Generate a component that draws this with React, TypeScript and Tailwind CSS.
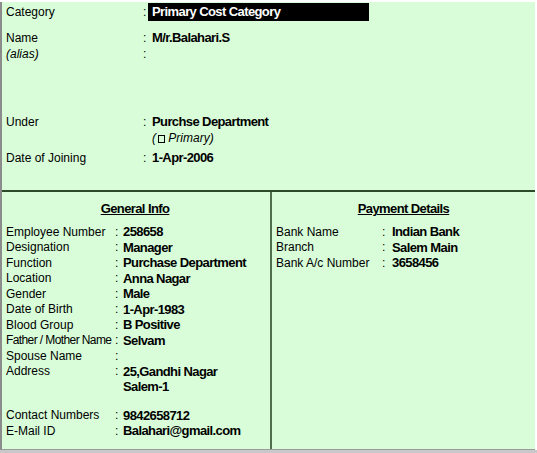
const FONT = { fontFamily: '"Liberation Sans", Arial, sans-serif' };

type Row = { label: string; value?: string; cont?: boolean; tight?: boolean };

const GENERAL: Row[] = [
  { label: 'Employee Number', value: '258658' },
  { label: 'Designation', value: 'Manager' },
  { label: 'Function', value: 'Purchase Department' },
  { label: 'Location', value: 'Anna Nagar' },
  { label: 'Gender', value: 'Male' },
  { label: 'Date of Birth', value: '1-Apr-1983' },
  { label: 'Blood Group', value: 'B Positive' },
  { label: 'Father / Mother Name', value: 'Selvam', tight: true },
  { label: 'Spouse Name', value: '' },
  { label: 'Address', value: '25,Gandhi Nagar' },
  { label: '', value: 'Salem-1', cont: true },
];

const CONTACT: Row[] = [
  { label: 'Contact Numbers', value: '9842658712' },
  { label: 'E-Mail ID', value: 'Balahari@gmail.com' },
];

const PAYMENT: Row[] = [
  { label: 'Bank Name', value: 'Indian Bank' },
  { label: 'Branch', value: 'Salem Main' },
  { label: 'Bank A/c Number', value: '3658456' },
];

function InfoRow({ row, labelW, colonW }: { row: Row; labelW: string; colonW: string }) {
  return (
    <div className="flex items-center h-[15.5px] whitespace-nowrap">
      <span className={`${labelW} shrink-0 text-[12px] ${row.tight ? 'tracking-[-0.6px]' : ''}`}>{row.label}</span>
      <span className={`${colonW} shrink-0 text-[12px]`}>{row.cont ? '' : ':'}</span>
      <span className="text-[13px] font-bold tracking-[-0.6px]">{row.value}</span>
    </div>
  );
}

export default function App() {
  return (
    <div className="w-[537px] h-[453px] bg-white text-black overflow-hidden" style={FONT}>
      <div className="mt-[2px] w-[535px] h-[448px] bg-[#d9fdd9] border-l-2 border-[#8c8c8c] border-b border-b-[#9a9a9a] flex flex-col">
        {/* Top: category / name */}
        <div className="h-[188px] shrink-0 pl-[4px] pt-[1px]">
          <div className="flex items-center h-[18px]">
            <span className="w-[137px] text-[12px]">Category</span>
            <span className="w-[5px] text-[12px]">:</span>
            <span className="w-[221px] h-[18px] bg-black text-white pl-[4px] flex items-center text-[13px] font-bold tracking-[-0.6px]">
              Primary Cost Category
            </span>
          </div>
          <div className="mt-[9px] flex items-center h-[16px]">
            <span className="w-[137px] text-[12px]">Name</span>
            <span className="w-[9px] text-[12px]">:</span>
            <span className="text-[13px] font-bold tracking-[-0.6px]">M/r.Balahari.S</span>
          </div>
          <div className="flex items-center h-[16px]">
            <span className="w-[137px] text-[12px] italic">(alias)</span>
            <span className="w-[9px] text-[12px]">:</span>
          </div>
          <div className="mt-[52px] flex items-center h-[16px]">
            <span className="w-[137px] text-[12px]">Under</span>
            <span className="w-[9px] text-[12px]">:</span>
            <span className="text-[13px] font-bold tracking-[-0.6px]">Purchse Department</span>
          </div>
          <div className="h-[16px] leading-[16px] pl-[146px] text-[12px] italic">
            <span>
              (<span className="inline-block w-[7px] h-[8px] border border-black ml-[2px] align-[-1px]" /> Primary)
            </span>
          </div>
          <div className="mt-[4px] flex items-center h-[16px]">
            <span className="w-[137px] text-[12px]">Date of Joining</span>
            <span className="w-[9px] text-[12px]">:</span>
            <span className="text-[13px] font-bold tracking-[-0.6px]">1-Apr-2006</span>
          </div>
        </div>

        <div className="h-[2px] shrink-0 bg-[#2b4b2b]" />

        {/* Bottom: two panels */}
        <div className="flex flex-1">
          <div className="w-[268px] shrink-0 pl-[4px]">
            <div className="mt-[9px] h-[16px] pr-[6px] flex items-center justify-center text-[13px] font-bold underline tracking-[-0.6px]">
              General Info
            </div>
            <div className="mt-[7px]">
              {GENERAL.map((r, i) => (
                <InfoRow key={i} row={r} labelW="w-[109px]" colonW="w-[8px]" />
              ))}
            </div>
            <div className="mt-[13px]">
              {CONTACT.map((r, i) => (
                <InfoRow key={i} row={r} labelW="w-[109px]" colonW="w-[8px]" />
              ))}
            </div>
          </div>
          <div className="w-[2px] shrink-0 bg-[#4f6f4f]" />
          <div className="flex-1">
            <div className="mt-[9px] h-[16px] flex items-center justify-center text-[13px] font-bold underline tracking-[-0.6px]">
              Payment Details
            </div>
            <div className="mt-[7px] pl-[4px]">
              {PAYMENT.map((r, i) => (
                <InfoRow key={i} row={r} labelW="w-[106px]" colonW="w-[10px]" />
              ))}
            </div>
          </div>
        </div>
      </div>
      <div className="h-[3px] bg-[#c8c8c8]" />
    </div>
  );
}
